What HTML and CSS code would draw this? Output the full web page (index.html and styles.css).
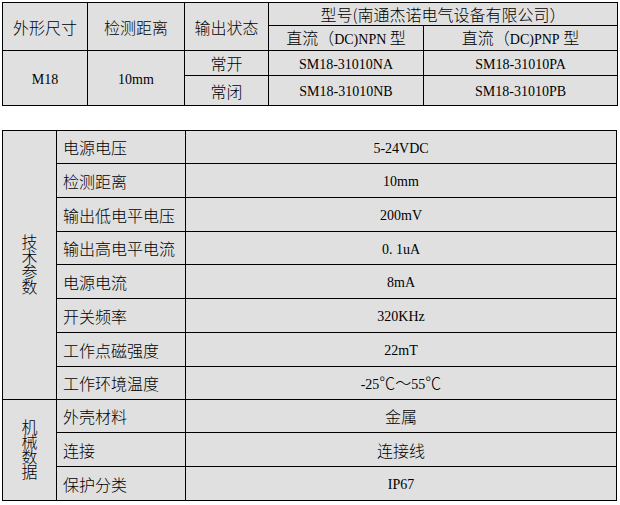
FILE: index.html
```html
<!DOCTYPE html>
<html lang="zh">
<head>
<meta charset="utf-8">
<title>SM18 规格</title>
<link rel="stylesheet" href="styles.css">
</head>
<body>
<div class="page">
  <table class="grid model">
    <colgroup>
      <col class="m-c1"><col class="m-c2"><col class="m-c3"><col class="m-c4"><col class="m-c5">
    </colgroup>
    <tr class="m-h1">
      <th rowspan="2">外形尺寸</th>
      <th rowspan="2">检测距离</th>
      <th rowspan="2">输出状态</th>
      <th colspan="2">型号(南通杰诺电气设备有限公司）</th>
    </tr>
    <tr class="m-h2">
      <th>直流（<span class="en">DC)NPN</span> 型</th>
      <th>直流（<span class="en">DC)PNP</span> 型</th>
    </tr>
    <tr class="m-r1">
      <td rowspan="2"><span class="en">M18</span></td>
      <td rowspan="2"><span class="en">10mm</span></td>
      <td>常开</td>
      <td><span class="en">SM18-31010NA</span></td>
      <td><span class="en">SM18-31010PA</span></td>
    </tr>
    <tr class="m-r2">
      <td>常闭</td>
      <td><span class="en">SM18-31010NB</span></td>
      <td><span class="en">SM18-31010PB</span></td>
    </tr>
  </table>

  <table class="grid params">
    <colgroup>
      <col class="p-c1"><col class="p-c2"><col class="p-c3">
    </colgroup>
    <tr class="h33">
      <td rowspan="8" class="group"><span class="vtext">技术参数</span></td>
      <td class="label">电源电压</td>
      <td class="value"><span class="en">5-24VDC</span></td>
    </tr>
    <tr class="h34"><td class="label">检测距离</td><td class="value"><span class="en">10mm</span></td></tr>
    <tr class="h34"><td class="label">输出低电平电压</td><td class="value"><span class="en">200mV</span></td></tr>
    <tr class="h33"><td class="label">输出高电平电流</td><td class="value"><span class="en">0. 1uA</span></td></tr>
    <tr class="h34"><td class="label">电源电流</td><td class="value"><span class="en">8mA</span></td></tr>
    <tr class="h34"><td class="label">开关频率</td><td class="value"><span class="en">320KHz</span></td></tr>
    <tr class="h34"><td class="label">工作点磁强度</td><td class="value"><span class="en">22mT</span></td></tr>
    <tr class="h33"><td class="label">工作环境温度</td><td class="value"><span class="en">-25</span>℃～<span class="en">55</span>℃</td></tr>
    <tr class="h33">
      <td rowspan="3" class="group"><span class="vtext">机械数据</span></td>
      <td class="label">外壳材料</td>
      <td class="value">金属</td>
    </tr>
    <tr class="h34"><td class="label">连接</td><td class="value">连接线</td></tr>
    <tr class="h34"><td class="label">保护分类</td><td class="value"><span class="en">IP67</span></td></tr>
  </table>
</div>
</body>
</html>
```

FILE: styles.css
```css
html, body {
  margin: 0;
  padding: 0;
  background: #ffffff;
}

.page {
  padding: 2px;
  display: flex;
  flex-direction: column;
  gap: 24px;
  font-family: "Noto Sans CJK SC", "Noto Sans", sans-serif;
  font-size: 16px;
  font-weight: 300;
  color: #000;
}

.grid {
  border-collapse: collapse;
  background: #e0e0e0;
  table-layout: fixed;
}

.grid th,
.grid td {
  border: 1px solid #000;
  padding: 0;
  font-weight: 300;
  text-align: center;
  vertical-align: middle;
  line-height: 18px;
  white-space: nowrap;
}

.en {
  font-family: "Liberation Serif", "Times New Roman", serif;
  font-size: 14px;
  font-weight: normal;
}

/* model table */
.model { width: 615px; }
.m-c1 { width: 85px; }
.m-c2 { width: 97px; }
.m-c3 { width: 84px; }
.m-c4 { width: 155px; }
.m-c5 { width: 194px; }
.m-h1 { height: 23px; }
.m-h2 { height: 25px; }
.m-r1 { height: 25px; }
.m-r2 { height: 30px; }

/* parameter table */
.params { width: 614px; }
.p-c1 { width: 54px; }
.p-c2 { width: 129px; }
.p-c3 { width: 431px; }
.h33 { height: 33px; }
.h34 { height: 34px; }

.params .label {
  text-align: left;
  padding-left: 6px;
}

.group .vtext {
  display: inline-block;
  writing-mode: vertical-lr;
  text-orientation: upright;
  line-height: 16px;
  letter-spacing: -1px;
}
```
